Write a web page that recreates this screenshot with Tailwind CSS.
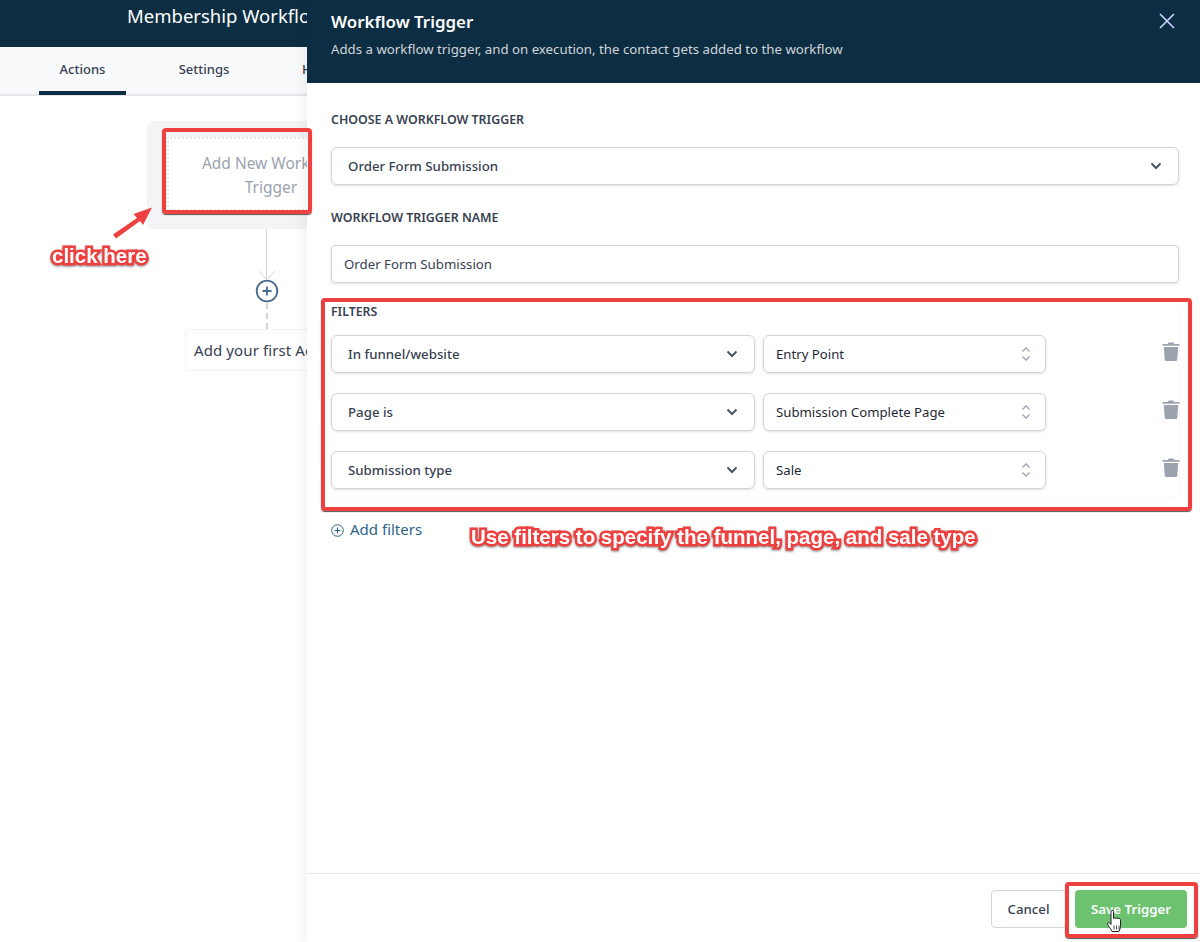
<!DOCTYPE html>
<html>
<head>
<meta charset="utf-8">
<script src="https://cdn.jsdelivr.net/npm/@tailwindcss/browser@4"></script>
</head>
<body class="font-['Noto_Sans',sans-serif] bg-white">
<div class="relative w-[1200px] h-[942px] overflow-hidden bg-white">
  <!-- Background page -->
  <header class="h-[47px] bg-[#0d2e42] flex justify-center">
    <div class="w-[1200px] pl-[127px] pt-[3px] text-white text-[18.5px] leading-[26px]">Membership Workflow</div>
  </header>
  <nav class="h-[49px] bg-[#f8fafc] border-b-2 border-[#e5e7eb] flex pl-[39px] text-[13px] text-[#374151]">
    <div class="w-[87px] h-[48px] border-b-4 border-[#0d2e42] flex justify-center pt-[13px] font-medium">Actions</div>
    <div class="w-[156px] flex justify-center pt-[13px] font-medium">Settings</div>
    <div class="font-medium pt-[13px] pl-[20px]">History</div>
  </nav>
  <!-- Workflow canvas -->
  <div class="absolute left-[147px] top-[121px] w-[240px] h-[108px] rounded-[6px] bg-[#f3f4f6] p-[16px_0_0_20px]">
    <div class="w-[220px] h-[74px] bg-white border-2 border-dotted border-[#e5e7eb] text-center text-[#9ca3af] text-[15.500px] leading-[24px] pt-[12px] pr-[12px]">Add New Workflow<br>Trigger</div>
  </div>
  <div class="absolute left-[266px] top-[229px] w-px h-[50px] bg-[#d1d5db]"></div>
  <svg class="absolute left-[258px] top-[270px]" width="18" height="12" viewBox="0 0 18 12" fill="none"><path d="M1 1l8 9 8-9" stroke="#d1d5db"/></svg>
  <svg class="absolute left-[255px] top-[280px]" width="24" height="24" viewBox="0 0 24 24" fill="#fff"><circle cx="12" cy="11" r="10.3" stroke="#4a6a8f" stroke-width="1.8"/><path d="M12 6.5v9M7.500 11h9" stroke="#4a6a8f" stroke-width="1.800"/></svg>
  <div class="absolute left-[266px] top-[303px] h-[26px] border-l-2 border-dashed border-[#d1d5db]"></div>
  <div class="absolute left-[185px] top-[329px] w-[200px] h-[42px] border border-dotted border-[#e5e7eb] rounded-[3px] pl-[8px] pt-[8px] text-[15px] leading-[24px] tracking-[0.1px] text-[#374151] whitespace-nowrap">Add your first Action</div>

  <!-- Drawer -->
  <aside class="absolute left-[307px] top-0 w-[893px] h-[942px] bg-white flex flex-col shadow-[-4px_0_12px_rgba(0,0,0,0.06)]">
    <div class="relative h-[83px] bg-[#0d2e42] pl-[24px] pt-[10px]">
      <h2 class="text-white text-[16.900px] leading-[24px] font-semibold">Workflow Trigger</h2>
      <p class="text-[#d1d5db] text-[13.250px] leading-[20px] mt-[5px]">Adds a workflow trigger, and on execution, the contact gets added to the workflow</p>
      <svg class="absolute left-[852px] top-[13px]" width="16" height="16" viewBox="0 0 16 16" fill="none"><path d="M1 1l14 14M15 1L1 15" stroke="#c7d2fe" stroke-width="1.700"/></svg>
    </div>
    <div class="flex-1 pl-[24px] pr-[21px]">
      <label class="block mt-[28px] pt-[1px] text-[12.400px] leading-[16px] font-semibold text-[#374151]">CHOOSE A WORKFLOW TRIGGER</label>
      <div class="mt-[19px] h-[38px] border border-[#d1d5db] rounded-[6px] flex items-center justify-between pl-[16px] pr-[16px] pt-[2px] text-[13.250px] font-medium text-[#374151] shadow-sm">
        <span>Order Form Submission</span>
        <svg class="-mt-[2px]" width="12" height="8" viewBox="0 0 12 8" fill="none"><path d="M1.500 1.500L6 6l4.500-4.500" stroke="#4b5563" stroke-width="2"/></svg>
      </div>
      <label class="block mt-[25px] text-[12.400px] leading-[16px] font-semibold text-[#374151]">WORKFLOW TRIGGER NAME</label>
      <div class="mt-[19px] h-[38px] border border-[#d1d5db] rounded-[4px] flex items-center pl-[12px] pt-[2px] text-[13.250px] text-[#374151] shadow-sm">Order Form Submission</div>
      <div class="mt-[21px] w-[849px] h-[194px] border-r border-b border-[#f7f7f8] rounded-[6px]">
        <div class="text-[12.300px] leading-[16px] font-semibold text-[#374151]">FILTERS</div>
        <div class="mt-[15px] flex flex-col gap-[20px]">
          <div class="flex items-start h-[38px]">
            <div class="w-[424px] shrink-0 h-[38px] border border-[#d1d5db] rounded-[6px] flex items-center justify-between pl-[16px] pr-[16px] pt-[2px] text-[13.250px] font-medium text-[#374151] shadow-sm"><span>In funnel/website</span><svg class="-mt-[2px]" width="12" height="8" viewBox="0 0 12 8" fill="none"><path d="M1.500 1.500L6 6l4.500-4.500" stroke="#4b5563" stroke-width="2"/></svg></div>
            <div class="ml-[8px] w-[283px] shrink-0 h-[38px] border border-[#d1d5db] rounded-[6px] flex items-center justify-between pl-[12px] pr-[14px] pt-[2px] text-[13.200px] text-[#1f2937] shadow-sm"><span>Entry Point</span><svg class="-mt-[2px]" width="10" height="16" viewBox="0 0 10 16" fill="none"><path d="M1.500 5.500L5 2l3.500 3.500M1.500 10.500L5 14l3.500-3.500" stroke="#9ca3af" stroke-width="1.300"/></svg></div>
            <svg class="ml-[116px] mt-[6px] shrink-0" width="18" height="20" viewBox="0 0 18 19" preserveAspectRatio="none"><path d="M6.500 1.500h5l.7 1.300H17.500v1.600H.5V2.800h5.300zM1.800 5.700h14.400l-.9 11.800c0 .8-.7 1.500-1.500 1.500H4.200c-.8 0-1.500-.7-1.500-1.500z" fill="#9ca3af"/></svg>
          </div>
          <div class="flex items-start h-[38px]">
            <div class="w-[424px] shrink-0 h-[38px] border border-[#d1d5db] rounded-[6px] flex items-center justify-between pl-[16px] pr-[16px] pt-[2px] text-[13.250px] font-medium text-[#374151] shadow-sm"><span>Page is</span><svg class="-mt-[2px]" width="12" height="8" viewBox="0 0 12 8" fill="none"><path d="M1.500 1.500L6 6l4.500-4.500" stroke="#4b5563" stroke-width="2"/></svg></div>
            <div class="ml-[8px] w-[283px] shrink-0 h-[38px] border border-[#d1d5db] rounded-[6px] flex items-center justify-between pl-[12px] pr-[14px] pt-[2px] text-[13.200px] text-[#1f2937] shadow-sm"><span>Submission Complete Page</span><svg class="-mt-[2px]" width="10" height="16" viewBox="0 0 10 16" fill="none"><path d="M1.500 5.500L5 2l3.500 3.500M1.500 10.500L5 14l3.500-3.500" stroke="#9ca3af" stroke-width="1.300"/></svg></div>
            <svg class="ml-[116px] mt-[6px] shrink-0" width="18" height="20" viewBox="0 0 18 19" preserveAspectRatio="none"><path d="M6.500 1.500h5l.7 1.300H17.500v1.600H.5V2.800h5.300zM1.800 5.700h14.400l-.9 11.800c0 .8-.7 1.500-1.500 1.500H4.200c-.8 0-1.500-.7-1.500-1.500z" fill="#9ca3af"/></svg>
          </div>
          <div class="flex items-start h-[38px]">
            <div class="w-[424px] shrink-0 h-[38px] border border-[#d1d5db] rounded-[6px] flex items-center justify-between pl-[16px] pr-[16px] pt-[2px] text-[13.250px] font-medium text-[#374151] shadow-sm"><span>Submission type</span><svg class="-mt-[2px]" width="12" height="8" viewBox="0 0 12 8" fill="none"><path d="M1.500 1.500L6 6l4.500-4.500" stroke="#4b5563" stroke-width="2"/></svg></div>
            <div class="ml-[8px] w-[283px] shrink-0 h-[38px] border border-[#d1d5db] rounded-[6px] flex items-center justify-between pl-[12px] pr-[14px] pt-[2px] text-[13.200px] text-[#1f2937] shadow-sm"><span>Sale</span><svg class="-mt-[2px]" width="10" height="16" viewBox="0 0 10 16" fill="none"><path d="M1.500 5.500L5 2l3.500 3.500M1.500 10.500L5 14l3.500-3.500" stroke="#9ca3af" stroke-width="1.300"/></svg></div>
            <svg class="ml-[116px] mt-[6px] shrink-0" width="18" height="20" viewBox="0 0 18 19" preserveAspectRatio="none"><path d="M6.500 1.500h5l.7 1.300H17.500v1.600H.5V2.800h5.300zM1.800 5.700h14.400l-.9 11.800c0 .8-.7 1.500-1.500 1.500H4.200c-.8 0-1.500-.7-1.500-1.500z" fill="#9ca3af"/></svg>
          </div>
        </div>
      </div>
      <div class="mt-[21px] flex items-center text-[15px] leading-[20px] text-[#2f6487]">
        <svg class="mt-[2px]" width="13" height="13" viewBox="0 0 13 13" fill="none"><circle cx="6.500" cy="6.500" r="5.800" stroke="#2f6487"/><path d="M6.500 3.500v6M3.500 6.500h6" stroke="#2f6487"/></svg>
        <span class="ml-[6px]">Add filters</span>
      </div>
    </div>
    <div class="h-[69px] border-t border-[#e5e7eb] flex justify-end items-start pt-[16px] pr-[13px] gap-[9px]">
      <div class="w-[75px] h-[38px] border border-[#d1d5db] rounded-[4px] flex items-center justify-center pt-[2px] text-[13.250px] font-medium text-[#374151]">Cancel</div>
      <div class="w-[112px] h-[38px] bg-[#6cc26f] rounded-[4px] flex items-center justify-center pt-[2px] text-[13.250px] font-semibold text-white">Save Trigger</div>
    </div>
  </aside>

  <!-- Annotations -->
  <div class="absolute left-[162px] top-[128px] w-[150px] h-[86px] border-[4px] border-[#ef4040] rounded-[4px] shadow-[0_1px_1px_#555]"></div>
  <div class="absolute left-[321px] top-[298px] w-[871px] h-[213px] border-[4px] border-[#ef4040] rounded-[4px] shadow-[0_1px_1px_#555]"></div>
  <div class="absolute left-[1065px] top-[882px] w-[133px] h-[56px] border-[4px] border-[#ef4040] rounded-[4px] shadow-[0_1px_1px_#555]"></div>
  <svg class="absolute left-[110px] top-[205px]" width="44" height="34" viewBox="0 0 44 34"><path d="M3 29.500L27 13l-3.500-4L42 2.500 33 20l-3-4L6 33.500z" fill="#ef4040"/></svg>
  <div class="absolute left-[52px] top-[243px] text-[20.500px] leading-[26px] font-bold text-white whitespace-nowrap [-webkit-text-stroke:5px_#ef4040] [paint-order:stroke_fill] [filter:drop-shadow(0_1px_1px_#888)] font-['Liberation_Sans',sans-serif]">click here</div>
  <div class="absolute left-[471px] top-[524px] text-[20.500px] leading-[26px] font-bold text-white whitespace-nowrap [-webkit-text-stroke:5px_#ef4040] [paint-order:stroke_fill] [filter:drop-shadow(0_1px_1px_#888)] font-['Liberation_Sans',sans-serif]">Use filters to specify the funnel, page, and sale type</div>
  <svg class="absolute left-[1106px] top-[909px]" width="18" height="25" viewBox="0 0 18 24"><path d="M5 2c0-1.500 2.500-1.500 2.500 0v7c0-1 2.300-1 2.300.2 0-1 2.200-1 2.200.3 0-1 2.500-.8 2.500.8V17c0 2-1 3-1.500 5H6c-.5-1.500-4-6-4.500-7.500-.4-1.300 1-2 2-1L5 15z" fill="#fff" stroke="#222" stroke-width="1"/><path d="M8 16v4M10.500 16v4M13 16v4" stroke="#222" stroke-width=".8"/></svg>
</div>
</body>
</html>
